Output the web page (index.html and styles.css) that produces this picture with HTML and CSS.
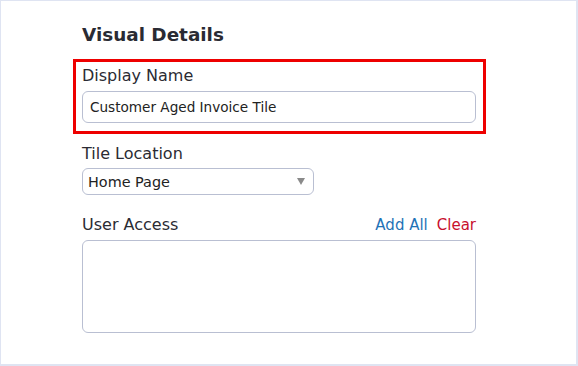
FILE: index.html
```html
<!DOCTYPE html>
<html>
<head>
<meta charset="utf-8">
<link rel="stylesheet" href="styles.css">
</head>
<body>
<div class="page">
  <div class="form">
    <h2 class="title">Visual Details</h2>
    <div class="field highlight">
      <label class="label">Display Name</label>
      <div class="input">Customer Aged Invoice Tile</div>
    </div>
    <div class="field loc">
      <label class="label">Tile Location</label>
      <div class="select"><span>Home Page</span><span class="arrow"></span></div>
    </div>
    <div class="field access">
      <div class="label-row">
        <label class="label">User Access</label>
        <div class="links"><a class="add">Add All</a><a class="clear">Clear</a></div>
      </div>
      <div class="textarea"></div>
    </div>
  </div>
</div>
</body>
</html>
```
FILE: styles.css
```css
* { box-sizing: border-box; }
html, body { margin: 0; padding: 0; background: #fff; }
body { font-family: "DejaVu Sans", "Open Sans", sans-serif; color: #2b2b33; }
.page {
  width: 578px;
  height: 366px;
  border: 1px solid #dfe4f2;
  border-right-width: 2px;
  border-bottom-width: 2px;
  padding-left: 81px;
  padding-top: 22px;
}
.form { width: 394px; display: flex; flex-direction: column; }
.title {
  margin: 0;
  font-size: 18.4px;
  font-weight: bold;
  line-height: 24px;
  color: #2a2b33;
}
.label {
  display: block;
  font-size: 16px;
  line-height: 20px;
  color: #2b2b33;
}
.field { display: flex; flex-direction: column; }
.highlight {
  margin-top: 12px;
  margin-left: -9px;
  width: 413px;
  border: 3px solid #ee0000;
  padding: 4px 7px 8px 6px;
}
.highlight .label { margin-bottom: 5px; }
.input {
  height: 32px;
  border: 1px solid #b9bfd2;
  border-radius: 6px;
  padding-left: 7px;
  font-size: 13.6px;
  line-height: 30px;
  color: #222;
}
.loc { margin-top: 10px; }
.loc .label { margin-bottom: 4px; }
.select {
  width: 232px;
  height: 27px;
  border: 1px solid #b9bfd2;
  border-radius: 6px;
  padding: 0 8px 0 5px;
  display: flex;
  align-items: center;
  justify-content: space-between;
  font-size: 14.4px;
  color: #222;
}
.arrow {
  width: 0; height: 0;
  border-left: 4px solid transparent;
  border-right: 4px solid transparent;
  border-top: 7px solid #8a8a8a;
}
.access { margin-top: 20px; }
.label-row { display: flex; justify-content: space-between; align-items: center; margin-bottom: 5px; }
.links { display: flex; gap: 9px; font-size: 15px; }
.add { color: #1f73b7; }
.clear { color: #c8102e; }
.textarea {
  height: 93px;
  border: 1px solid #b9bfd2;
  border-radius: 6px;
}
```
